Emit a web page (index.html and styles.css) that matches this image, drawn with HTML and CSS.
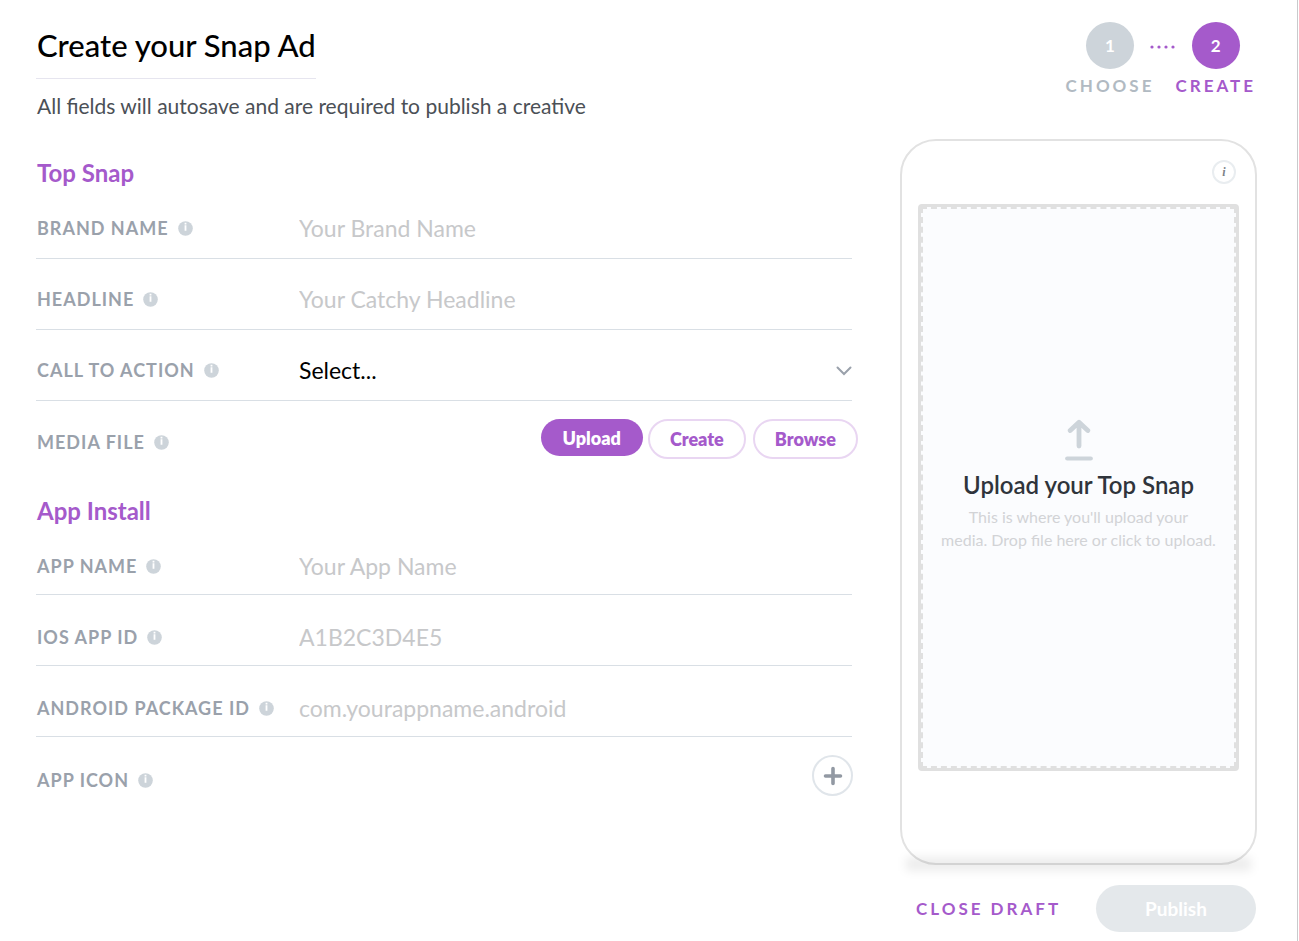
FILE: index.html
```html
<!DOCTYPE html>
<html lang="en">
<head>
<meta charset="utf-8">
<title>Create your Snap Ad</title>
<link rel="stylesheet" href="styles.css">
</head>
<body>
<svg class="sprite" aria-hidden="true">
  <symbol id="info" viewBox="0 0 15 15">
    <circle cx="7.500" cy="7.500" r="7.300" fill="#cdd4da"/>
    <path d="M6.600 1.800h1.800v1.700H6.600zM6.600 4.300h1.800v5.400H6.600z" fill="#fff"/>
  </symbol>
</svg>
<div class="page">
  <main class="form">
    <h1 class="title">Create your Snap Ad</h1>
    <p class="intro">All fields will autosave and are required to publish a creative</p>

    <section class="group">
      <h2 class="group-title">Top Snap</h2>
      <div class="row">
        <label class="label" for="brand">BRAND NAME <svg class="info"><use href="#info"/></svg></label>
        <input class="field" id="brand" type="text" placeholder="Your Brand Name">
      </div>
      <div class="row">
        <label class="label" for="headline">HEADLINE <svg class="info"><use href="#info"/></svg></label>
        <input class="field" id="headline" type="text" placeholder="Your Catchy Headline">
      </div>
      <div class="row">
        <label class="label" for="cta">CALL TO ACTION <svg class="info"><use href="#info"/></svg></label>
        <select class="field select" id="cta"><option>Select...</option></select>
        <svg class="chevron" viewBox="0 0 16 10" aria-hidden="true"><path d="M1.500 1.500 8 8l6.500-6.500" fill="none" stroke="#9aa1ab" stroke-width="2" stroke-linecap="round"/></svg>
      </div>
      <div class="row row-plain">
        <span class="label" id="media">MEDIA FILE <svg class="info"><use href="#info"/></svg></span>
        <div class="actions" role="group" aria-labelledby="media">
          <button class="pill pill-solid" type="button">Upload</button>
          <button class="pill" type="button">Create</button>
          <button class="pill pill-last" type="button">Browse</button>
        </div>
      </div>
    </section>

    <section class="group group-app">
      <h2 class="group-title">App Install</h2>
      <div class="row">
        <label class="label" for="app">APP NAME <svg class="info"><use href="#info"/></svg></label>
        <input class="field" id="app" type="text" placeholder="Your App Name">
      </div>
      <div class="row">
        <label class="label" for="ios">IOS APP ID <svg class="info"><use href="#info"/></svg></label>
        <input class="field" id="ios" type="text" placeholder="A1B2C3D4E5">
      </div>
      <div class="row">
        <label class="label" for="android">ANDROID PACKAGE ID <svg class="info"><use href="#info"/></svg></label>
        <input class="field" id="android" type="text" placeholder="com.yourappname.android">
      </div>
      <div class="row row-plain">
        <span class="label">APP ICON <svg class="info"><use href="#info"/></svg></span>
        <button class="add" type="button" aria-label="Add app icon"><svg class="plus" viewBox="0 0 20 20"><path d="M10 2.500v15M2.500 10h15" stroke="#9299a3" stroke-width="3.600" stroke-linecap="round"/></svg></button>
      </div>
    </section>
  </main>

  <aside class="side">
    <ol class="steps">
      <li class="step"><span class="dot">1</span>CHOOSE</li>
      <li class="step step-current"><svg class="trail" viewBox="0 0 26 4" aria-hidden="true"><g fill="#a55acb"><circle cx="2" cy="2" r="1.600"/><circle cx="9" cy="2" r="1.600"/><circle cx="16" cy="2" r="1.600"/><circle cx="23" cy="2" r="1.600"/></g></svg><span class="dot">2</span>CREATE</li>
    </ol>
    <div class="phone">
      <button class="about" type="button" aria-label="Preview information">i</button>
      <button class="drop" type="button">
        <span class="drop-inner">
          <svg class="arrow" viewBox="0 0 28 42" aria-hidden="true"><g fill="none" stroke="#cdd4da" stroke-linecap="round" stroke-linejoin="round"><path d="M14 27V3.500M5.200 11.500 14 3.200l8.800 8.300" stroke-width="4.800"/><path d="M2.200 39.500h23.600" stroke-width="4.200"/></g></svg>
          <span class="drop-title">Upload your Top Snap</span>
          <span class="drop-text">This is where you'll upload your<br>media. Drop file here or click to upload.</span>
        </span>
      </button>
    </div>
    <div class="footer">
      <button class="close" type="button">CLOSE DRAFT</button>
      <button class="publish" type="button" disabled>Publish</button>
    </div>
  </aside>
</div>
</body>
</html>
```
FILE: styles.css
```css
* { box-sizing: border-box; }
body { margin: 0; background: #fff; color: #000; font-family: Lato, "Open Sans", sans-serif; overflow-x: hidden; }
button, input, select { font: inherit; color: inherit; margin: 0; padding: 0; background: none; border: 0; }
.sprite { position: absolute; width: 0; height: 0; }

.page {
  display: grid;
  grid-template-columns: minmax(0, 1fr) 357px;
  column-gap: 48px;
  min-height: 100vh;
  margin-right: 1px;
  padding: 22px 40px 0 36px;
  border-right: 1px solid #c9cacc;
}

.title { width: fit-content; margin: 0; padding: 3px 0 13px 1px; border-bottom: 1px solid #e6e5ef; font-size: 31px; line-height: 40px; font-weight: 500; }
.intro { margin: 13px 0 0 1px; font-size: 21px; line-height: 28px; color: #4b5056; }
.group-title { margin: 0 0 0 1px; font-size: 24px; line-height: 30px; font-weight: 700; color: #a55acb; }
.group { margin-top: 38px; }
.group-app { margin-top: 33px; }
.group-app .group-title { line-height: 26px; }

.row { position: relative; display: flex; align-items: center; padding: 20px 0 10px; border-bottom: 1px solid #d9dfe5; }
.group-app .row { padding: 22px 0 8px; }
.label { display: flex; flex: 0 0 262px; align-items: center; gap: 9px; height: 40px; padding-left: 1px; font-size: 18px; font-weight: 700; letter-spacing: 1px; white-space: nowrap; color: #9aa1ab; }
.info { flex: none; width: 15px; height: 15px; }
.field { flex: 1; min-width: 0; height: 40px; padding-left: 1px; font-size: 23px; outline: 0; }
.field::placeholder { color: #c7c8ca; opacity: 1; }
.select { appearance: none; }
.chevron { position: absolute; right: 0; top: 36px; width: 16px; height: 10px; pointer-events: none; }
.row-plain, .group-app .row-plain { justify-content: space-between; align-items: flex-start; padding: 18px 0 0; border: 0; }
.row-plain .label { height: 46px; }
.group-app .row-plain .label { height: 50px; }

.actions { display: flex; align-items: flex-start; gap: 5px; margin-right: -6px; }
.pill { height: 40px; padding: 0 20px; border: 2px solid #e9d6f2; border-radius: 20px; font-size: 18px; font-weight: 800; color: #a55acb; }
.pill-solid { height: 37px; padding: 0 22px; border: 0; background: #a55acb; color: #fff; }
.pill-last { margin-left: 2px; }
.add { display: grid; place-items: center; width: 41px; height: 41px; margin-right: -1px; border: 2px solid #e0e5ea; border-radius: 50%; }
.plus { width: 20px; height: 20px; }

.steps { display: flex; justify-content: flex-end; gap: 21px; height: 117px; margin: 0; padding: 0 1px 0 0; list-style: none; }
.step { position: relative; display: flex; flex-direction: column; align-items: center; font-size: 17px; line-height: 34px; font-weight: 700; letter-spacing: 3px; color: #b1bac2; }
.step-current { color: #a55acb; }
.dot { display: grid; place-items: center; width: 48px; height: 47px; border-radius: 50%; background: #cdd4da; color: #fff; font-weight: 700; letter-spacing: 0; }
.step-current .dot { background: #a55acb; }
.trail { position: absolute; left: -25px; top: 23px; width: 26px; height: 4px; }

.phone { position: relative; padding: 19px 16px 92px; border: 2px solid #e2e2e2; border-radius: 36px; background: #fff; }
.phone::after { content: ""; position: absolute; left: 4px; right: 4px; bottom: -8px; height: 14px; background: rgba(0, 0, 0, 0.07); filter: blur(4px); pointer-events: none; }
.about { display: block; width: 24px; height: 24px; margin: 0 3px 20px auto; border: 2px solid #e9edf0; border-radius: 50%; font: italic bold 12px/20px "Liberation Serif", serif; color: #7c8288; }
.drop { display: block; width: 100%; aspect-ratio: 321 / 567; border: 3px solid #e0e0e0; border-radius: 4px; background: #fbfcfe; }
.drop-inner { display: flex; flex-direction: column; align-items: center; justify-content: center; height: 100%; padding-bottom: 6px; border: 2px dashed #e0e0e0; }
.arrow { width: 28px; height: 42px; }
.drop-title { margin-top: 8px; font-size: 24px; line-height: 32px; font-weight: 600; color: #2f343b; }
.drop-text { margin-top: 4px; font-size: 16px; line-height: 23px; white-space: nowrap; color: #d2d3d6; }

.footer { display: flex; align-items: center; justify-content: space-between; margin-top: 20px; padding: 0 1px 0 16px; }
.close { font-size: 17px; font-weight: 700; letter-spacing: 3px; color: #a55acb; }
.publish { width: 160px; height: 47px; border-radius: 24px; background: #e4e8eb; font-size: 19px; font-weight: 700; color: #fff; }
```
